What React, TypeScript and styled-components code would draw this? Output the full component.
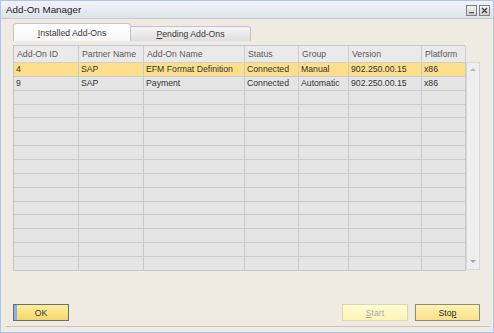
import * as React from 'react'
import styled, { createGlobalStyle, css } from 'styled-components'

const GlobalStyle = createGlobalStyle`
	html, body {
		margin: 0;
		padding: 0;
		background: #ffffff;
	}
	body {
		font-family: 'Liberation Sans', Arial, sans-serif;
		font-size: 8.7px;
		color: #222222;
	}
`

type Row = {
	id: string
	partner: string
	name: string
	status: string
	group: string
	version: string
	platform: string
}

const COLUMNS = [
	{ label: 'Add-On ID', width: 65 },
	{ label: 'Partner Name', width: 65 },
	{ label: 'Add-On Name', width: 101 },
	{ label: 'Status', width: 54 },
	{ label: 'Group', width: 50 },
	{ label: 'Version', width: 73 },
	{ label: 'Platform', width: 44 },
]

const ROWS: Row[] = [
	{
		id: '4',
		partner: 'SAP',
		name: 'EFM Format Definition',
		status: 'Connected',
		group: 'Manual',
		version: '902.250.00.15',
		platform: 'x86',
	},
	{
		id: '9',
		partner: 'SAP',
		name: 'Payment',
		status: 'Connected',
		group: 'Automatic',
		version: '902.250.00.15',
		platform: 'x86',
	},
]

const ROW_COUNT = 15

const Window = styled.div`
	width: 494px;
	height: 333px;
	box-sizing: border-box;
	border: 1px solid #a9c7ee;
	background: #f0ebe2;
	display: flex;
	flex-direction: column;
	overflow: hidden;
`

const TitleBar = styled.div`
	height: 17px;
	flex: none;
	display: flex;
	align-items: center;
	justify-content: space-between;
	padding: 0 3px 0 5px;
	background: linear-gradient(#f1f5fa, #dde3ea);
	border-bottom: 1px solid #c3cad3;
`

const Title = styled.span`
	font-size: 9.8px;
	color: #1c1c1c;
`

const Controls = styled.div`
	display: flex;
	gap: 2px;
	padding-top: 1px;
`

const CtrlButton = styled.div`
	width: 9px;
	height: 9px;
	border: 1px solid #808080;
	background: linear-gradient(#f2f2f2, #d2d2d2);
	display: flex;
	align-items: center;
	justify-content: center;
`

const Body = styled.div`
	flex: 1;
	display: flex;
	flex-direction: column;
	padding: 4px 13px 0 12px;
	min-height: 0;
`

const Tabs = styled.div`
	display: flex;
	align-items: flex-end;
	height: 18px;
	flex: none;
`

const Tab = styled.div<{ $active?: boolean }>`
	box-sizing: border-box;
	display: flex;
	align-items: center;
	justify-content: center;
	color: #383838;
	border: 1px solid #c4c4c4;
	border-bottom: none;
	border-radius: 3px 3px 0 0;
	${(p) =>
		p.$active
			? css`
					width: 118px;
					height: 18px;
					background: linear-gradient(#ffffff, #f7f7f7);
				`
			: css`
					width: 120px;
					height: 15px;
					border-left: none;
					border-radius: 0 3px 0 0;
					background: linear-gradient(#f6f6f6, #dedede);
				`}

	u {
		text-decoration: underline;
		text-underline-offset: 1px;
	}
`

const GridArea = styled.div`
	display: flex;
	align-items: flex-start;
	margin-top: 4px;
	flex: none;
`

const Table = styled.div`
	display: grid;
	grid-template-columns: ${COLUMNS.map((c) => `${c.width}px`).join(' ')};
	grid-template-rows: 17px repeat(${ROW_COUNT}, 13.87px);
	border-left: 1px solid #c6c6c6;
	border-top: 1px solid #c6c6c6;
	box-sizing: border-box;
	width: 452px;
`

const HeaderCell = styled.div`
	box-sizing: border-box;
	background: #eaeaea;
	color: #5a5a5a;
	border-right: 1px solid #cecece;
	border-bottom: 1px solid #cecece;
	padding: 0 3px;
	display: flex;
	align-items: center;
	white-space: nowrap;
	overflow: hidden;
`

const Cell = styled.div<{ $selected?: boolean }>`
	box-sizing: border-box;
	background: ${(p) => (p.$selected ? '#fddf8b' : '#e5e5e5')};
	color: #333333;
	border-right: 1px solid #cacaca;
	border-bottom: 1px solid #cacaca;
	padding: 0 2px;
	display: flex;
	align-items: center;
	white-space: nowrap;
	overflow: hidden;
`

const ScrollBar = styled.div`
	box-sizing: border-box;
	width: 15px;
	margin-top: 17px;
	height: 208px;
	margin-left: 1px;
	background: #eeeeee;
	border: 1px solid #d8d8d8;
	display: flex;
	flex-direction: column;
	justify-content: space-between;
	align-items: center;
	padding: 5px 0 6px;
`

const Arrow = styled.div<{ $down?: boolean }>`
	width: 0;
	height: 0;
	border-left: 3px solid transparent;
	border-right: 3px solid transparent;
	${(p) =>
		p.$down
			? css`
					border-top: 3px solid #a6a6a6;
				`
			: css`
					border-bottom: 3px solid #b8b8b8;
				`}
`

const Footer = styled.div`
	margin-top: auto;
	margin-bottom: 5px;
	display: flex;
	align-items: center;
	gap: 7px;
	height: 17px;
	flex: none;
`

const Spacer = styled.div`
	flex: 1;
`

const Button = styled.div<{ $variant: 'primary' | 'disabled' | 'normal'; $w: number }>`
	box-sizing: border-box;
	width: ${(p) => p.$w}px;
	height: 17px;
	display: flex;
	align-items: center;
	justify-content: center;
	${(p) =>
		p.$variant === 'primary'
			? css`
					border: 1px solid #6e6e6e;
					background: linear-gradient(#fbee9f, #f3d76a);
					color: #383838;
					box-shadow: inset 3px 0 0 #8cb0e2;
				`
			: p.$variant === 'disabled'
				? css`
						border: 1px solid #ddd7ad;
						background: linear-gradient(#fffcd6, #fff3b4);
						color: #a9a9a9;
					`
				: css`
						border: 1px solid #8e8a7a;
						background: linear-gradient(#fff2b2, #fbe08a);
						color: #2c2c2c;
					`}

	u {
		text-decoration: underline;
		text-underline-offset: 1px;
	}
`

const Separator = styled.div`
	height: 1px;
	flex: none;
	background: #c9c6bf;
	margin: 0 3px 5px 5px;
`

const MinGlyph = () => (
	<svg width="7" height="7" viewBox="0 0 7 7">
		<rect x="1" y="5" width="5" height="1.2" fill="#505050" />
	</svg>
)

const CloseGlyph = () => (
	<svg width="7" height="7" viewBox="0 0 7 7">
		<path d="M1 1 L6 6 M6 1 L1 6" stroke="#404040" strokeWidth="1.4" />
	</svg>
)

const rowValues = (r: Row) => [r.id, r.partner, r.name, r.status, r.group, r.version, r.platform]

const App = () => {
	const rows: Array<Row | null> = Array.from({ length: ROW_COUNT }, (_, i) => ROWS[i] ?? null)

	return (
		<>
			<GlobalStyle />
			<Window>
				<TitleBar>
					<Title>Add-On Manager</Title>
					<Controls>
						<CtrlButton>
							<MinGlyph />
						</CtrlButton>
						<CtrlButton>
							<CloseGlyph />
						</CtrlButton>
					</Controls>
				</TitleBar>
				<Body>
					<Tabs>
						<Tab $active>
							<span>
								<u>I</u>nstalled Add-Ons
							</span>
						</Tab>
						<Tab>
							<span>
								<u>P</u>ending Add-Ons
							</span>
						</Tab>
					</Tabs>
					<GridArea>
						<Table>
							{COLUMNS.map((c) => (
								<HeaderCell key={c.label}>{c.label}</HeaderCell>
							))}
							{rows.map((r, i) =>
								COLUMNS.map((c, j) => (
									<Cell key={`${i}-${c.label}`} $selected={i === 0}>
										{r ? rowValues(r)[j] : ''}
									</Cell>
								))
							)}
						</Table>
						<ScrollBar>
							<Arrow />
							<Arrow $down />
						</ScrollBar>
					</GridArea>
					<Footer>
						<Button $variant="primary" $w={56}>
							OK
						</Button>
						<Spacer />
						<Button $variant="disabled" $w={66}>
							<span>
								<u>S</u>tart
							</span>
						</Button>
						<Button $variant="normal" $w={65}>
							<span>
								Sto<u>p</u>
							</span>
						</Button>
					</Footer>
				</Body>
				<Separator />
			</Window>
		</>
	)
}

export default App
